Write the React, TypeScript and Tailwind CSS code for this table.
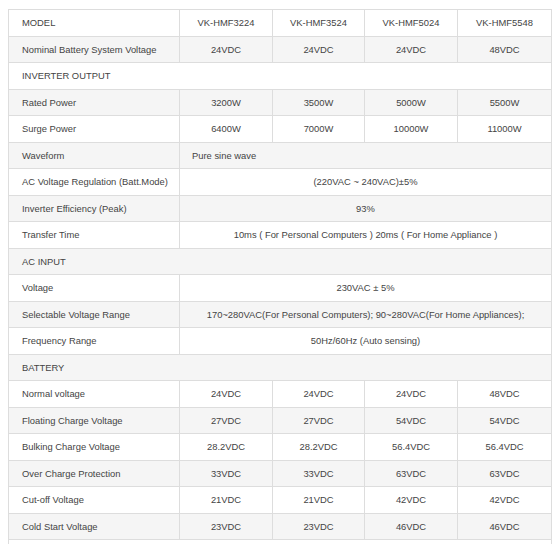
import React from 'react';

type Row =
  | { kind: 'section'; label: string }
  | { kind: 'cols'; label: string; values: string[] }
  | { kind: 'span'; label: string; value: string; left?: boolean };

const rows: Row[] = [
  { kind: 'cols', label: 'MODEL', values: ['VK-HMF3224', 'VK-HMF3524', 'VK-HMF5024', 'VK-HMF5548'] },
  { kind: 'cols', label: 'Nominal Battery System Voltage', values: ['24VDC', '24VDC', '24VDC', '48VDC'] },
  { kind: 'section', label: 'INVERTER OUTPUT' },
  { kind: 'cols', label: 'Rated Power', values: ['3200W', '3500W', '5000W', '5500W'] },
  { kind: 'cols', label: 'Surge Power', values: ['6400W', '7000W', '10000W', '11000W'] },
  { kind: 'span', label: 'Waveform', value: 'Pure sine wave', left: true },
  { kind: 'span', label: 'AC Voltage Regulation (Batt.Mode)', value: '(220VAC ~ 240VAC)±5%' },
  { kind: 'span', label: 'Inverter Efficiency (Peak)', value: '93%' },
  { kind: 'span', label: 'Transfer Time', value: '10ms ( For Personal Computers ) 20ms ( For Home Appliance )' },
  { kind: 'section', label: 'AC INPUT' },
  { kind: 'span', label: 'Voltage', value: '230VAC ± 5%' },
  {
    kind: 'span',
    label: 'Selectable Voltage Range',
    value: '170~280VAC(For Personal Computers); 90~280VAC(For Home Appliances);',
  },
  { kind: 'span', label: 'Frequency Range', value: '50Hz/60Hz (Auto sensing)' },
  { kind: 'section', label: 'BATTERY' },
  { kind: 'cols', label: 'Normal voltage', values: ['24VDC', '24VDC', '24VDC', '48VDC'] },
  { kind: 'cols', label: 'Floating Charge Voltage', values: ['27VDC', '27VDC', '54VDC', '54VDC'] },
  { kind: 'cols', label: 'Bulking Charge Voltage', values: ['28.2VDC', '28.2VDC', '56.4VDC', '56.4VDC'] },
  { kind: 'cols', label: 'Over Charge Protection', values: ['33VDC', '33VDC', '63VDC', '63VDC'] },
  { kind: 'cols', label: 'Cut-off Voltage', values: ['21VDC', '21VDC', '42VDC', '42VDC'] },
  { kind: 'cols', label: 'Cold Start Voltage', values: ['23VDC', '23VDC', '46VDC', '46VDC'] },
  { kind: 'section', label: '\u00a0' },
];

const cell = 'border border-[#dddddd] py-[4px] leading-[17.5px] whitespace-nowrap';

export default function App() {
  return (
    <div className="bg-white min-h-screen pt-[9px] pl-[8px]">
      <table
        className="table-fixed border-collapse w-[544px] text-[9.4px] text-[#444444]"
        style={{ fontFamily: '"Liberation Sans", Arial, sans-serif' }}
      >
        <colgroup>
          <col className="w-[171px]" />
          <col className="w-[93px]" />
          <col className="w-[92px]" />
          <col className="w-[93px]" />
          <col className="w-[94px]" />
        </colgroup>
        <tbody>
          {rows.map((row, i) => (
            <tr key={i} className={i % 2 === 1 ? 'bg-[#f5f5f5]' : 'bg-white'}>
              {row.kind === 'section' ? (
                <td colSpan={5} className={`${cell} pl-[13px] text-left`}>
                  {row.label}
                </td>
              ) : (
                <>
                  <td className={`${cell} pl-[13px] text-left`}>{row.label}</td>
                  {row.kind === 'cols' ? (
                    row.values.map((v, j) => (
                      <td key={j} className={`${cell} text-center`}>
                        {v}
                      </td>
                    ))
                  ) : (
                    <td colSpan={4} className={`${cell} ${row.left ? 'pl-[12px] text-left' : 'text-center'}`}>
                      {row.value}
                    </td>
                  )}
                </>
              )}
            </tr>
          ))}
        </tbody>
      </table>
    </div>
  );
}
